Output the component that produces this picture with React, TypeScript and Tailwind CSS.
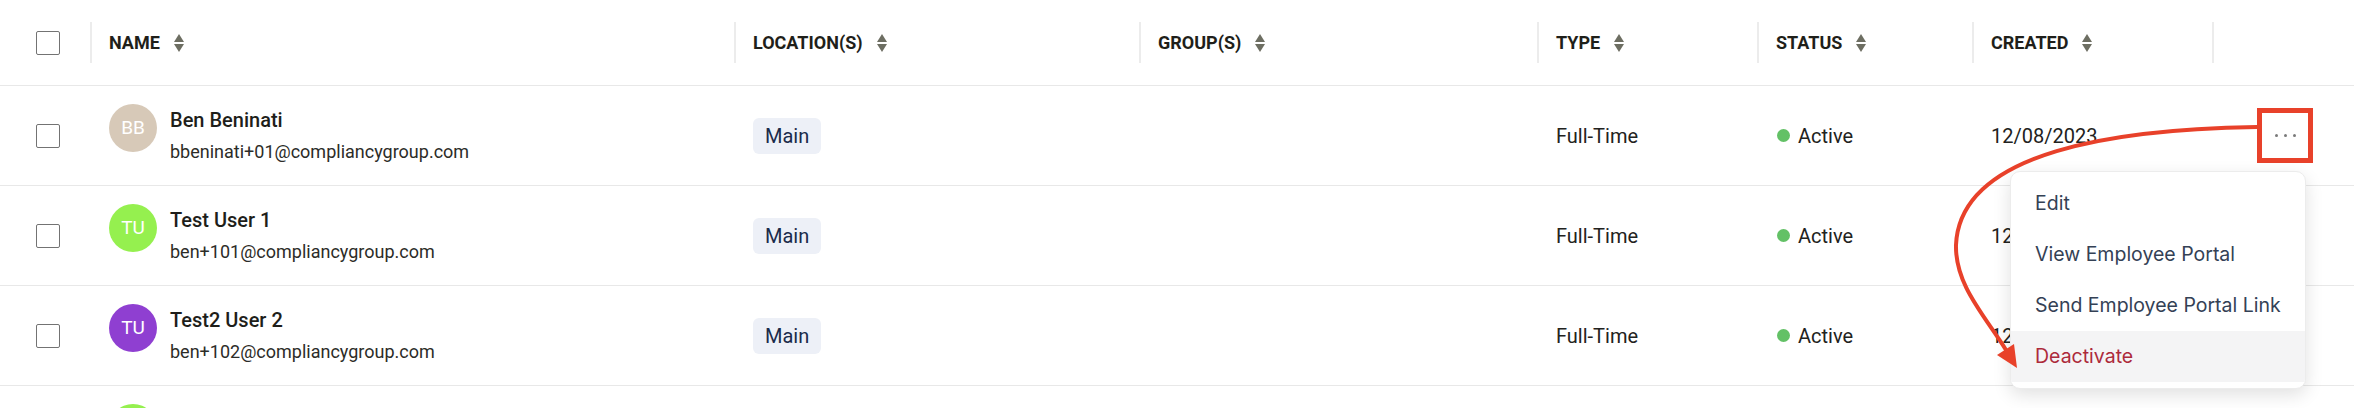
import React from "react";

const COLS = "grid grid-cols-[90px_644px_405px_398px_220px_215px_240px_1fr]";

function SortIcon() {
  return (
    <svg width="10" height="18" viewBox="0 0 10 18" className="shrink-0">
      <polygon points="5,0 10,8 0,8" fill="#6d6e62" />
      <polygon points="0,10 10,10 5,18" fill="#6d6e62" />
    </svg>
  );
}

function Checkbox() {
  return <div className="w-[24px] h-[24px] border border-[#737373] rounded-[2px] bg-white" />;
}

function HeaderCell({ label, sort = true }: { label?: string; sort?: boolean }) {
  return (
    <div className="flex items-center h-full">
      <div className="w-[2px] h-[41px] bg-[#ececec]" />
      {label ? (
        <div className="pl-[17px] flex items-center gap-[14px]">
          <span className="text-[18px] font-bold text-[#1f1f1a] leading-none">{label}</span>
          {sort && <SortIcon />}
        </div>
      ) : null}
    </div>
  );
}

type User = {
  initials: string;
  color: string;
  name: string;
  email: string;
  date: string;
};

const users: User[] = [
  { initials: "BB", color: "bg-[#d7c9b8]", name: "Ben Beninati", email: "bbeninati+01@compliancygroup.com", date: "12/08/2023" },
  { initials: "TU", color: "bg-[#95f04f]", name: "Test User 1", email: "ben+101@compliancygroup.com", date: "12/08/2023" },
  { initials: "TU", color: "bg-[#8f3fd1]", name: "Test2 User 2", email: "ben+102@compliancygroup.com", date: "12/08/2023" },
  { initials: "TU", color: "bg-[#95f04f]", name: "Test3 User 3", email: "ben+103@compliancygroup.com", date: "12/08/2023" },
];

function Menu() {
  return (
    <div
      className="absolute right-[48px] top-[85px] z-10 w-[296px] py-[6px] rounded-[10px] bg-white border border-[#ececec] shadow-[0_6px_18px_rgba(0,0,0,0.12)] overflow-hidden"
      style={{ fontFamily: "Inter, 'Noto Sans', sans-serif" }}
    >
      <div className="h-[51px] pl-[24px] flex items-center whitespace-nowrap text-[19.5px] text-[#344155]">Edit</div>
      <div className="h-[51px] pl-[24px] flex items-center whitespace-nowrap text-[19.5px] text-[#344155]">View Employee Portal</div>
      <div className="h-[51px] pl-[24px] flex items-center whitespace-nowrap text-[19.5px] text-[#344155]">Send Employee Portal Link</div>
      <div className="h-[51px] pl-[24px] flex items-center whitespace-nowrap text-[19.5px] text-[#ad2a3b] bg-[#f4f4f5]">Deactivate</div>
    </div>
  );
}

function Row({ u, first }: { u: User; first: boolean }) {
  return (
    <div className={`${COLS} h-[100px] border-b border-[#e8e8e8]`}>
      <div className="flex items-center pl-[36px]">
        <Checkbox />
      </div>
      <div className="flex items-start pl-[19px] pt-[18px] gap-[13px]">
        <div className={`w-[48px] h-[48px] rounded-full ${u.color} flex items-center justify-center text-white text-[19px] shrink-0`}>
          {u.initials}
        </div>
        <div className="pt-[2px]">
          <div className="text-[20px] leading-[28px] font-medium text-[#1e1e1a]">{u.name}</div>
          <div className="mt-[6px] text-[18px] leading-[24px] text-[#2c2c28]">{u.email}</div>
        </div>
      </div>
      <div className="flex items-center pl-[19px]">
        <div className="h-[36px] px-[12px] rounded-[6px] bg-[#edf0f7] text-[#1b2b4a] text-[20px] flex items-center">Main</div>
      </div>
      <div />
      <div className="flex items-center pl-[19px] text-[20px] text-[#222220]">Full-Time</div>
      <div className="flex items-center pl-[20px] gap-[8px] text-[20px] text-[#222220]">
        <div className="w-[13px] h-[13px] rounded-full bg-[#63c166]" />
        <span>Active</span>
      </div>
      <div className="flex items-center pl-[19px] text-[20px] text-[#222220]">{u.date}</div>
      <div className="relative flex items-center justify-center">
        {first && (
          <>
            <div className="w-[56px] h-[55px] border-[5px] border-[#e8412a] flex items-center justify-center gap-[6px] ml-[4px]">
              <div className="w-[3px] h-[3px] rounded-full bg-[#7a7a7a]" />
              <div className="w-[3px] h-[3px] rounded-full bg-[#7a7a7a]" />
              <div className="w-[3px] h-[3px] rounded-full bg-[#7a7a7a]" />
            </div>
            <Menu />
          </>
        )}
      </div>
    </div>
  );
}

export default function App() {
  return (
    <div className="relative w-full h-[408px] overflow-hidden bg-white" style={{ fontFamily: "Roboto, 'Liberation Sans', sans-serif" }}>
      <div className={`${COLS} h-[86px] border-b border-[#e8e8e8]`}>
        <div className="flex items-center pl-[36px]">
          <Checkbox />
        </div>
        <HeaderCell label="NAME" />
        <HeaderCell label="LOCATION(S)" />
        <HeaderCell label="GROUP(S)" />
        <HeaderCell label="TYPE" />
        <HeaderCell label="STATUS" />
        <HeaderCell label="CREATED" />
        <HeaderCell />
      </div>
      {users.map((u, i) => (
        <Row key={i} u={u} first={i === 0} />
      ))}
      <svg className="absolute left-0 top-0 pointer-events-none z-20" width="2354" height="408" viewBox="0 0 2354 408">
        <path
          d="M 2257 127 C 2120 129, 1960 150, 1956 245 C 1955 285, 1985 316, 2006 350"
          fill="none"
          stroke="#e8412a"
          strokeWidth="4"
          strokeLinecap="round"
        />
        <polygon points="2017,368 1997,355 2014,344" fill="#e8412a" />
      </svg>
    </div>
  );
}
